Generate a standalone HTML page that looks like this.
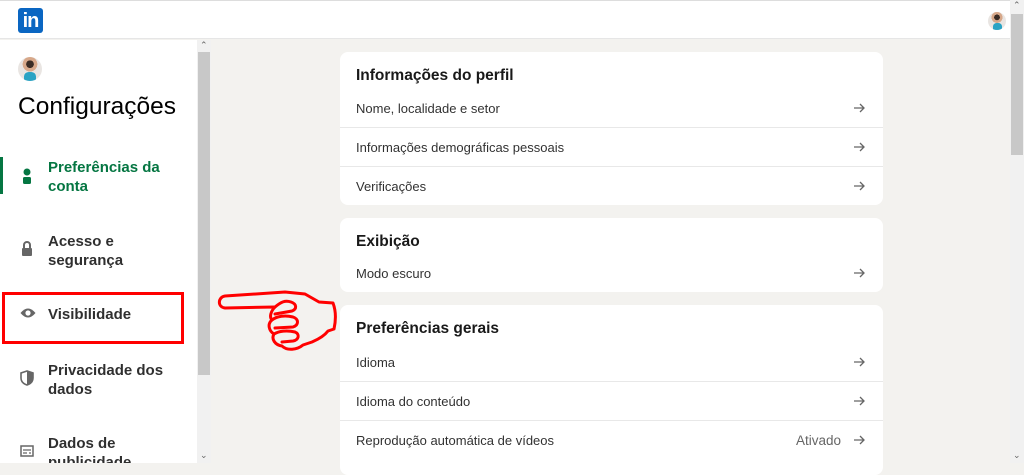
<!DOCTYPE html>
<html><head><meta charset="utf-8"><style>
*{margin:0;padding:0;box-sizing:border-box}
body{width:1024px;height:463px;overflow:hidden;background:#f3f2ef;font-family:"Liberation Sans",sans-serif;position:relative;color:#000000e6}
.top{position:absolute;left:0;top:0;width:1024px;height:39px;background:#fff;border-top:1px solid #ddd;border-bottom:1px solid #e6e6e6}
.logo{position:absolute;left:18px;top:7px;width:25px;height:25px;background:#0a66c2;border-radius:3px;color:#fff;font-weight:bold;font-size:20px;line-height:26px;text-align:center;letter-spacing:-1px}
.av{position:absolute;border-radius:50%;background:radial-gradient(circle at 50% 30%,#3a2c25 0 18%,#d7a88a 19% 35%,#e9e5e2 36%);overflow:hidden}
.av:after{content:"";position:absolute;left:25%;top:62%;width:50%;height:45%;background:#2aa3c4;border-radius:40% 40% 0 0}
.side{position:absolute;left:0;top:40px;width:197px;height:423px;background:#fff;overflow:hidden}
.sb{position:absolute;left:197px;top:40px;width:14px;height:423px;background:#f1f1f1}
.sb i{position:absolute;left:1px;top:12px;width:12px;height:323px;background:#c8c8c8}
.rsb{position:absolute;left:1010px;top:0;width:14px;height:463px;background:#f1f1f1}
.rsb i{position:absolute;left:1px;top:14px;width:12px;height:141px;background:#c8c8c8}
.arr{position:absolute;font-size:9px;color:#666}
h1{position:absolute;left:18px;font-size:24.5px;font-weight:normal;color:#000}
.it{position:absolute;left:48px;font-size:15px;line-height:19px;font-weight:bold;color:#000000d0}
.ic{position:absolute;left:20px}
.card{position:absolute;left:340px;width:543px;background:#fff;border-radius:8px;overflow:hidden}
.card h2{font-size:15.5px;font-weight:bold;padding:0 16px;color:#000000e6;position:absolute}
.row{position:absolute;left:0;width:543px;height:39px;font-size:13px;color:#000000d0;padding-left:16px;line-height:39px;border-top:1px solid #e8e8e8}
.row svg{position:absolute;right:18px;top:14px}
.row.first{border-top:none}
.row span{position:absolute;right:42px;color:#666;font-size:13.5px}
</style></head><body>
<div class="top"><div class="logo">in</div><div class="av" style="left:988px;top:11px;width:18px;height:18px"></div></div>
<div class="side">
<div class="av" style="left:18px;top:17px;width:24px;height:24px"></div>
<h1 style="top:53px">Configurações</h1>
<div style="position:absolute;left:0;top:117px;width:3px;height:37px;background:#057642"></div>
<svg class="ic" style="top:127px" width="14" height="20"><circle cx="7" cy="5" r="3.5" fill="#057642"/><rect x="3" y="10" width="8" height="7" rx="1.5" fill="#057642"/></svg>
<div class="it" style="top:118px;color:#057642">Preferências da<br>conta</div>
<svg class="ic" style="top:200px" width="14" height="18"><path d="M4 8V5a3 3 0 0 1 6 0v3" stroke="#666" stroke-width="2" fill="none"/><rect x="2" y="8" width="10" height="8" rx="1" fill="#666"/></svg>
<div class="it" style="top:192px">Acesso e<br>segurança</div>
<svg class="ic" style="top:267px" width="16" height="12"><path d="M0.5 6Q8-3 15.5 6Q8 15 0.5 6Z" fill="#666"/><circle cx="8" cy="6" r="2.6" fill="#fff"/></svg>
<div class="it" style="top:265px">Visibilidade</div>
<div style="position:absolute;left:2px;top:252px;width:182px;height:52px;border:3px solid #f00"></div>
<svg class="ic" style="top:330px" width="14" height="16"><path d="M7 1L1 3v5c0 4 3 6 6 7 3-1 6-3 6-7V3Z" fill="none" stroke="#666" stroke-width="1.6"/><path d="M7 1v14c3-1 6-3 6-7V3Z" fill="#666"/></svg>
<div class="it" style="top:321px">Privacidade dos<br>dados</div>
<svg class="ic" style="top:405px" width="14" height="12"><rect x="1" y="1" width="12" height="10" fill="none" stroke="#666" stroke-width="1.5"/><path d="M3 5h8M3 8h4M9 8h2" stroke="#666" stroke-width="1.3"/></svg>
<div class="it" style="top:394px">Dados de<br>publicidade</div>
</div>
<div class="sb"><span class="arr" style="left:3px;top:0">⌃</span><i></i><span class="arr" style="left:3px;top:410px">⌄</span></div>
<div class="rsb"><span class="arr" style="left:3px;top:0">⌃</span><i></i><span class="arr" style="left:3px;top:450px">⌄</span></div>
<svg style="position:absolute;left:215px;top:287px" width="125" height="66" viewBox="0 0 125 66" fill="none" stroke="#f00" stroke-width="3" stroke-linejoin="round" stroke-linecap="round">
<path d="M10 9C3 10 2 20 10 21L60 20C56 24 54 30 57 33C52 37 54 44 59 47C56 52 60 58 67 59C72 64 82 63 88 58L97 55C104 52 110 48 113 44L119 42C121 33 121 24 118 16L104 15L90 7L70 5Z"/>
<path d="M60 20C66 15 70 13 76 15C82 17 82 22 77 24L60 27"/>
<path d="M57 33C62 29 70 28 78 30C84 32 84 38 78 40L60 41"/>
<path d="M59 47C64 44 72 43 80 45C85 47 84 53 78 54L67 55"/>
</svg>
<div class="card" style="top:52px;height:153px"><h2 style="top:15px">Informações do perfil</h2>
<div class="row first" style="top:37px">Nome, localidade e setor<svg width="12" height="10"><path d="M1 5h10M7 1l4 4-4 4" stroke="#666" stroke-width="1.3" fill="none"/></svg></div>
<div class="row" style="top:75px">Informações demográficas pessoais<svg width="12" height="10"><path d="M1 5h10M7 1l4 4-4 4" stroke="#666" stroke-width="1.3" fill="none"/></svg></div>
<div class="row" style="top:114px">Verificações<svg width="12" height="10"><path d="M1 5h10M7 1l4 4-4 4" stroke="#666" stroke-width="1.3" fill="none"/></svg></div></div>
<div class="card" style="top:218px;height:74px"><h2 style="top:15px">Exibição</h2>
<div class="row first" style="top:36px">Modo escuro<svg width="12" height="10"><path d="M1 5h10M7 1l4 4-4 4" stroke="#666" stroke-width="1.3" fill="none"/></svg></div></div>
<div class="card" style="top:305px;height:170px"><h2 style="top:15px">Preferências gerais</h2>
<div class="row first" style="top:38px">Idioma<svg width="12" height="10"><path d="M1 5h10M7 1l4 4-4 4" stroke="#666" stroke-width="1.3" fill="none"/></svg></div>
<div class="row" style="top:76px">Idioma do conteúdo<svg width="12" height="10"><path d="M1 5h10M7 1l4 4-4 4" stroke="#666" stroke-width="1.3" fill="none"/></svg></div>
<div class="row" style="top:115px">Reprodução automática de vídeos<span>Ativado</span><svg width="12" height="10"><path d="M1 5h10M7 1l4 4-4 4" stroke="#666" stroke-width="1.3" fill="none"/></svg></div></div>
</body></html>
